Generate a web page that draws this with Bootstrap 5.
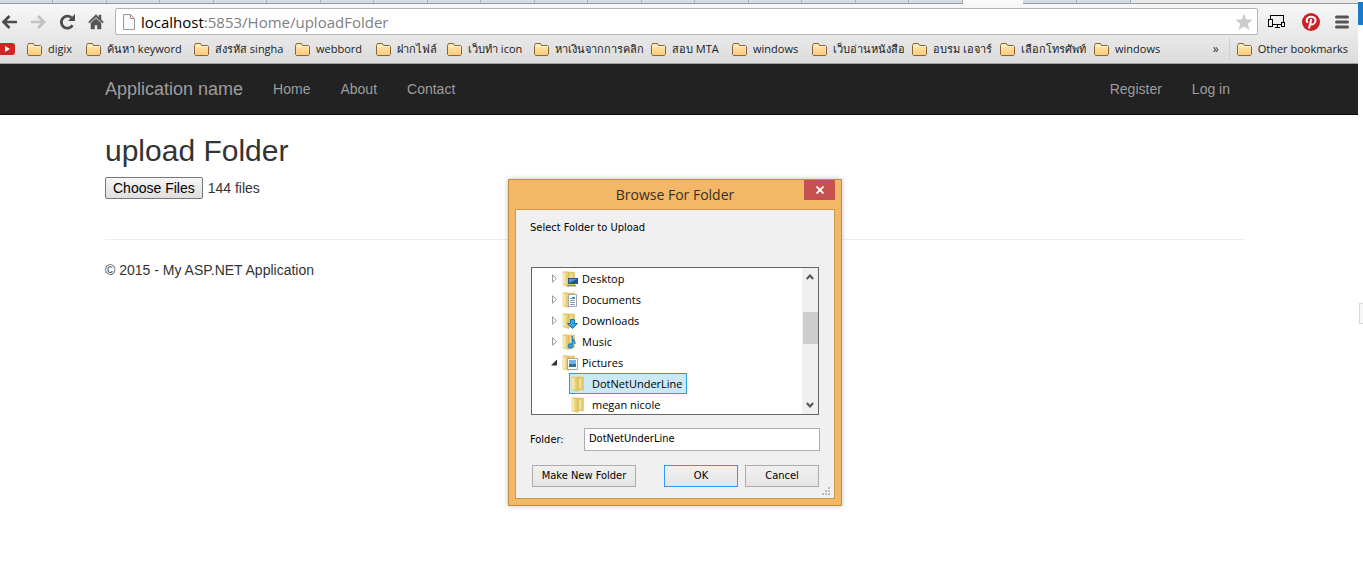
<!DOCTYPE html>
<html lang="en">
<head>
<meta charset="utf-8">
<meta name="viewport" content="width=device-width, initial-scale=1">
<title>upload Folder - My ASP.NET Application</title>
<link href="https://cdn.jsdelivr.net/npm/bootstrap@5.3.0/dist/css/bootstrap.min.css" rel="stylesheet">
<style>
  body { font-family: "Liberation Sans", Arial, sans-serif; font-size: 14px; line-height: 20px; color: #333; background: #fff; overflow: hidden; }
  svg { display: block; flex: none; }

  /* browser window and the strip of desktop beside it */
  .browser-pane { min-width: 0; min-height: 100vh; }
  .desk-edge { width: 5px; padding-top: 2px; }
  .desk-edge .accent { height: 23px; background: #1979ca; }
  .desk-edge .handle { height: 21px; margin-top: 278px; border: 1px solid #d9d9d9; border-right: 0; background: #f7f7f7; margin-left: 1px; }

  .tab-strip { height: 4px; border-bottom: 1px solid #989ca5; background: #e9e9ea; }
  .tab-run { background: #d5dbe5; }
  .tab-run i { border-right: 1px solid #a9aeb8; }
  .tab-front { background: #fafafa; height: 4px; }

  .chrome-bars { font-family: "Open Sans", "Noto Sans", sans-serif; background: linear-gradient(#f7f7f7, #dcdcdc); border-bottom: 1px solid #a0a0a0; height: 60px; padding-top: 4px; }
  .icon-btn { border: 0; padding: 0; background: none; }
  .nav-icons { width: 115px; gap: 11px; }
  .ext-icons { width: 100px; padding: 0 9px 0 10px; }
  .omnibox { height: 27px; border: 1px solid #b4b4b4; border-radius: 2px; background: #fff; padding: 0 4px 0 7px; gap: 6px; }
  .omnibox .address { font-size: 15px; line-height: 24px; color: #808080; white-space: nowrap; }
  .omnibox .address b { color: #000; font-weight: 400; }
  .bookmark-row { font-size: 11px; line-height: 20px; height: 28px; }
  .bookmark-row a { color: #222; text-decoration: none; white-space: nowrap; display: flex; align-items: center; gap: 6px; overflow: hidden; flex: none; }
  .bookmark-row .video-mark { width: 27px; }
  .bookmark-row .others { padding-right: 10px; }
  .bookmark-row .more { margin-right: 10px; font-size: 12px; }
  .bm-rule { width: 1px; height: 22px; background: #c5d3df; margin-right: 7px; }

  /* site */
  .site-nav { min-height: 51px; padding: 0 8px 0 0; background: #222; border-bottom: 1px solid #080808; }
  .site-body { padding-right: 8px; }
  .site-width { max-width: 1170px; padding: 0 15px; }
  .site-nav .navbar-brand { font-size: 18px; line-height: 20px; padding: 15px 0; margin-right: 15px; color: #9d9d9d; }
  .site-nav .navbar-nav .nav-link { padding: 15px; color: #9d9d9d; }
  h2 { font-size: 30px; line-height: 33px; font-weight: 400; margin: 19px 0 10px; }
  .file-pick { display: block; width: 300px; height: 22px; font-size: 14px; line-height: 20px; }
  .file-pick::file-selector-button { height: 22px; margin: 0 5px 0 0; padding: 0 7px; border: 1px solid #777; border-radius: 2px; background: linear-gradient(#f6f6f6, #dedede); color: #000; font: 14px/20px "Liberation Sans", Arial, sans-serif; }
  .site-body hr { margin: 40px 0 20px; border-top: 1px solid #eee; opacity: 1; }

  /* folder dialog */
  .folder-dialog { position: absolute; left: 508px; top: 179px; width: 334px; padding: 0 6px 6px; border: 1px solid #c38f45; background: #f3b768; box-shadow: 0 0 5px rgba(0,0,0,.25); color: #000; font-family: "DejaVu Sans Condensed", "Open Sans", sans-serif; font-size: 11px; line-height: 14px; }
  .dlg-title { height: 29px; font: 14px/29px "Open Sans", sans-serif; color: #3a2f20; text-align: center; position: relative; margin: 0; }
  .dlg-close { position: absolute; right: 0; top: 0; width: 31px; height: 20px; border: 0; background: #c75050; padding: 0; display: flex; align-items: center; justify-content: center; }
  .dlg-body { border: 1px solid #cd984c; background: #f0f0f0; padding: 11px 15px 11px 14px; position: relative; }
  .tree-box { height: 148px; margin: 32px 0 13px 1px; border: 1px solid #646464; background: #fff; font: 11px/21px "Open Sans", sans-serif; overflow: hidden; }
  .tree-box li { height: 21px; display: flex; align-items: center; padding-left: 18px; white-space: nowrap; }
  .tree-box li .twist { margin-right: 3px; }
  .tree-box li .name { margin-left: 4px; }
  .tree-box li.child { padding-left: 37px; }
  .tree-box .pick { display: flex; align-items: center; height: 21px; padding: 0 3px 0 1px; border: 1px solid transparent; }
  .tree-box .pick .name { margin-left: 5px; }
  .tree-box .chosen { border-color: #26a0da; background: #cbe8f6; }
  .scroll-rail { width: 16px; background: #f0f0f0; padding: 5px 0; }
  .scroll-grip { width: 15px; height: 32px; background: #cdcdcd; margin-top: 31px; }
  .dlg-field { height: 23px; width: 236px; border: 1px solid #abadb3; padding: 0 4px 3px; color: #000; background: #fff; font: inherit; margin-right: -1px; }
  .dlg-actions { margin: 14px 0 0 2px; gap: 7px; }
  .dlg-btn { height: 22px; border: 1px solid #acacac; background: linear-gradient(#f0f0f0, #e5e5e5); padding: 0; font: inherit; color: #000; width: 74px; }
  .dlg-btn.wide { width: 104px; }
  .dlg-btn.main { border-color: #3399ff; }
  .grip-dots { position: absolute; right: 3px; bottom: 2px; }
</style>
</head>
<body>
<svg width="0" height="0" class="position-absolute" aria-hidden="true">
  <defs>
    <linearGradient id="gold" x1="0" y1="0" x2="0" y2="1"><stop offset="0" stop-color="#ffe9b5"/><stop offset="1" stop-color="#fbcb78"/></linearGradient>
    <linearGradient id="pale" x1="0" y1="0" x2="1" y2="0"><stop offset="0" stop-color="#f7e9a0"/><stop offset="1" stop-color="#dfc25c"/></linearGradient>
    <symbol id="bmf" viewBox="0 0 15 13"><path d="M.5 11.5v-9l1-2h5l1 2h6l1 1v8l-1 1h-12z" fill="url(#gold)" stroke="#8d6436"/><path d="M1.500 3.500h12" stroke="#fff3d2"/></symbol>
    <symbol id="fold" viewBox="0 0 16 16"><path d="M1 1l1-1h4v14H1z" fill="#f3e196"/><path d="M6 1h6.500v13H6z" fill="#e6cd70" stroke="#d3b75a" stroke-width=".5"/><path d="M1 1l6 1v13.500L1 14z" fill="url(#pale)" stroke="#d3b75a" stroke-width=".5"/><path d="M2 2v11M9 3v9" stroke="#fffbe0" stroke-opacity=".8"/></symbol>
    <symbol id="twc" viewBox="0 0 9 9"><path d="M2.500.8v7.400L6.500 4.500z" fill="#fff" stroke="#9a9a9a"/></symbol>
  </defs>
</svg>

<div class="d-flex">
  <div class="browser-pane flex-grow-1">
    <div class="tab-strip d-flex" id="tabs"></div>

    <div class="chrome-bars">
      <div class="d-flex align-items-center">
        <div class="nav-icons d-flex align-items-center">
          <button class="icon-btn" aria-label="Back"><svg width="19" height="16" viewBox="0 0 19 16"><path d="M17 8H4M9.500 2L3.500 8l6 6" fill="none" stroke="#4c4c4c" stroke-width="2.700"/></svg></button>
          <button class="icon-btn" aria-label="Forward"><svg width="18" height="16" viewBox="0 0 18 16"><path d="M1 8h12M8 2l6 6-6 6" fill="none" stroke="#c3c3c3" stroke-width="2.700"/></svg></button>
          <button class="icon-btn" aria-label="Reload"><svg width="18" height="16" viewBox="0 0 18 16"><path d="M13.500 11.300A6 6 0 1 1 12.500 3.800" fill="none" stroke="#4c4c4c" stroke-width="2.800"/><path d="M16 0v7H9z" fill="#4c4c4c"/></svg></button>
          <button class="icon-btn" aria-label="Home"><svg width="16" height="16" viewBox="0 0 16 16"><path d="M8 .5L.5 8l1 1L8 3l6.500 6 1-1L13 5.500V1h-2v2.500zM3 9v6h3.500v-4h3v4H13V9L8 4.500z" fill="#555" stroke="#555" stroke-width=".5"/></svg></button>
        </div>
        <div class="omnibox d-flex align-items-center flex-grow-1">
          <svg width="12" height="16" viewBox="0 0 12 16"><path d="M.5.5h7l4 4v11H.5z" fill="#fafafa" stroke="#999"/><path d="M7.500.5v4h4" fill="none" stroke="#999"/></svg>
          <span class="address flex-grow-1"><b>localhost</b>:5853/Home/uploadFolder</span>
          <svg width="18" height="18" viewBox="0 0 18 18"><path d="M9 .5l2.400 5.900 6.300.4-4.900 4 1.600 6.200L9 13.600 3.600 17l1.600-6.200-4.900-4 6.300-.4z" fill="#ccc"/></svg>
        </div>
        <div class="ext-icons d-flex align-items-center justify-content-between">
          <svg width="18" height="15" viewBox="0 0 18 15" shape-rendering="crispEdges"><path d="M2.500 5V1.500h13V8M5 10.500h8.500M1.500 5.500h3v7h-4v-7zM13.500 8.500h3v4h-3zM9.500 11v2M7 13.500h5" fill="none" stroke="#000"/></svg>
          <svg width="18" height="18" viewBox="0 0 18 18"><circle cx="9" cy="9" r="9" fill="#cb2027"/><path d="M5.600 9.800C3.200 6.200 6 3.700 9.300 3.700c3 0 4.500 1.900 4.200 4.300-.4 3.200-3.900 4.500-5 2.400M9.300 6L7 15.500" fill="none" stroke="#fff" stroke-width="2"/></svg>
          <svg width="14" height="14" viewBox="0 0 14 14"><path d="M1.500 2h11M1.500 7h11M1.500 12h11" stroke="#555" stroke-width="3" stroke-linecap="round"/></svg>
        </div>
      </div>
      <div class="bookmark-row d-flex align-items-center">
        <a href="#" aria-label="YouTube" class="video-mark"><svg width="15" height="12" viewBox="0 0 15 12"><rect x="-3" width="18" height="12" rx="3" fill="#d32323"/><path d="M5 3l5 3-5 3z" fill="#fff"/></svg></a>
        <div class="d-flex flex-grow-1" id="marks"></div>
        <span class="more">»</span>
        <span class="bm-rule"></span>
        <a href="#" class="others"><svg width="15" height="13"><use href="#bmf"/></svg>Other bookmarks</a>
      </div>
    </div>

    <nav class="navbar navbar-expand site-nav">
      <div class="container site-width">
        <a class="navbar-brand" href="#">Application name</a>
        <ul class="navbar-nav me-auto">
          <li class="nav-item"><a class="nav-link" href="#">Home</a></li>
          <li class="nav-item"><a class="nav-link" href="#">About</a></li>
          <li class="nav-item"><a class="nav-link" href="#">Contact</a></li>
        </ul>
        <ul class="navbar-nav">
          <li class="nav-item"><a class="nav-link" href="#">Register</a></li>
          <li class="nav-item"><a class="nav-link" href="#">Log in</a></li>
        </ul>
      </div>
    </nav>

    <main class="site-body">
      <div class="container site-width">
        <h2><label for="files">upload Folder</label></h2>
        <input class="file-pick" type="file" id="files" multiple>
        <hr>
        <footer>© 2015 - My ASP.NET Application</footer>
      </div>
    </main>
  </div>
  <div class="desk-edge"><div class="accent"></div><div class="handle"></div></div>
</div>

<div class="folder-dialog" role="dialog" aria-labelledby="dlgTitle">
  <div class="dlg-title"><span id="dlgTitle">Browse For Folder</span>
    <button class="dlg-close" aria-label="Close"><svg width="8" height="8" viewBox="0 0 8 8"><path d="M.5.5l7 7M7.500.5l-7 7" stroke="#fff" stroke-width="1.800"/></svg></button>
  </div>
  <div class="dlg-body">
    <div>Select Folder to Upload</div>
    <div class="tree-box d-flex">
      <ul class="list-unstyled mb-0 flex-grow-1">
        <li><svg class="twist" width="9" height="9"><use href="#twc"/></svg><svg width="16" height="16" viewBox="0 0 16 16"><use href="#fold" width="16" height="16"/><path d="M6 7h10v6H6z" fill="#234fa8"/><path d="M7 8h8l-8 4z" fill="#5c93e0"/><path d="M5 14h9v1.500H5z" fill="#8a8f99"/></svg><span class="name">Desktop</span></li>
        <li><svg class="twist" width="9" height="9"><use href="#twc"/></svg><svg width="16" height="16" viewBox="0 0 16 16"><use href="#fold" width="16" height="16"/><path d="M6.500 2.500h8v12h-8z" fill="#fff" stroke="#a5a5a5"/><path d="M8 6.500h2M8 8.500h5M8 10.500h5M8 12.500h5" stroke="#8a9bb3"/><path d="M10 5h3v2h-3z" fill="#3d8ede"/></svg><span class="name">Documents</span></li>
        <li><svg class="twist" width="9" height="9"><use href="#twc"/></svg><svg width="16" height="16" viewBox="0 0 16 16"><use href="#fold" width="16" height="16"/><path d="M8.500 6.500h4v4h3l-5 5-5-5h3z" fill="#38a4e4" stroke="#1873b4"/></svg><span class="name">Downloads</span></li>
        <li><svg class="twist" width="9" height="9"><use href="#twc"/></svg><svg width="16" height="16" viewBox="0 0 16 16"><use href="#fold" width="16" height="16"/><path d="M10 2c0 3 4 4 3 8-.3-2-1.500-3-2-3v5a2.500 2.500 0 1 1-1-2z" fill="#2f9be0" stroke="#1766a8" stroke-width=".6"/></svg><span class="name">Music</span></li>
        <li><svg class="twist" width="9" height="9" viewBox="0 0 9 9"><path d="M7 1.500V7.500H1z" fill="#333"/></svg><svg width="16" height="16" viewBox="0 0 16 16"><use href="#fold" width="16" height="16"/><path d="M5.500 3.500h10v11h-10z" fill="#fff" stroke="#a5a5a5"/><path d="M7 5h7v4H7z" fill="#6fb5e8"/><path d="M7 9h7v3H7z" fill="#2d7391"/></svg><span class="name">Pictures</span></li>
        <li class="child"><span class="pick chosen"><svg width="16" height="16"><use href="#fold"/></svg><span class="name">DotNetUnderLine</span></span></li>
        <li class="child"><span class="pick"><svg width="16" height="16"><use href="#fold"/></svg><span class="name">megan nicole</span></span></li>
      </ul>
      <div class="scroll-rail d-flex flex-column align-items-center">
        <svg width="8" height="8" viewBox="0 0 8 8"><path d="M.8 6L4 2.500 7.200 6" fill="none" stroke="#555" stroke-width="2"/></svg>
        <div class="scroll-grip"></div>
        <svg class="mt-auto" width="8" height="8" viewBox="0 0 8 8"><path d="M.8 2L4 5.500 7.200 2" fill="none" stroke="#555" stroke-width="2"/></svg>
      </div>
    </div>
    <div class="d-flex align-items-center justify-content-between">
      <label for="folderName">Folder:</label>
      <input class="dlg-field" id="folderName" type="text" value="DotNetUnderLine">
    </div>
    <div class="dlg-actions d-flex">
      <button class="dlg-btn wide me-auto">Make New Folder</button>
      <button class="dlg-btn main">OK</button>
      <button class="dlg-btn">Cancel</button>
    </div>
    <svg class="grip-dots" width="9" height="9" viewBox="0 0 9 9"><path d="M6 0h2v2H6zM3 3h2v2H3zM6 3h2v2H6zM0 6h2v2H0zM3 6h2v2H3zM6 6h2v2H6z" fill="#bbb"/></svg>
  </div>
</div>

<script src="https://cdn.jsdelivr.net/npm/bootstrap@5.3.0/dist/js/bootstrap.bundle.min.js"></script>
<script>
  // tab strip: 18 tabs, the front tab, then two more
  const run = (n, share) => `<div class="tab-run d-flex" style="width:${share}%">${'<i class="flex-fill"></i>'.repeat(n)}</div>`;
  document.getElementById('tabs').innerHTML = run(18, 70.9) + '<div class="tab-front" style="width:4.4%"></div>' + run(2, 8);

  // bookmarks: [name, item width]
  const marks = [['digix', 59], ['ค้นหา keyword', 108], ['ส่งรหัส singha', 101], ['webbord', 81], ['ฝากไฟล์', 71], ['เว็บทำ icon', 87],
    ['หาเงินจากการคลิก', 117], ['สอบ MTA', 81], ['windows', 80], ['เว็บอ่านหนังสือ', 100], ['อบรม เอจาร์', 88], ['เลือกโทรศัพท์', 94], ['windows', 80]];
  document.getElementById('marks').innerHTML = marks.map(([name, w]) =>
    `<a href="#" style="width:${w}px"><svg width="15" height="13"><use href="#bmf"/></svg>${name}</a>`).join('');

  // the chosen folder holds 144 files
  const picked = new DataTransfer();
  for (let i = 1; i <= 144; i++) picked.items.add(new File([''], `file${i}.png`));
  document.getElementById('files').files = picked.files;
</script>
</body>
</html>
